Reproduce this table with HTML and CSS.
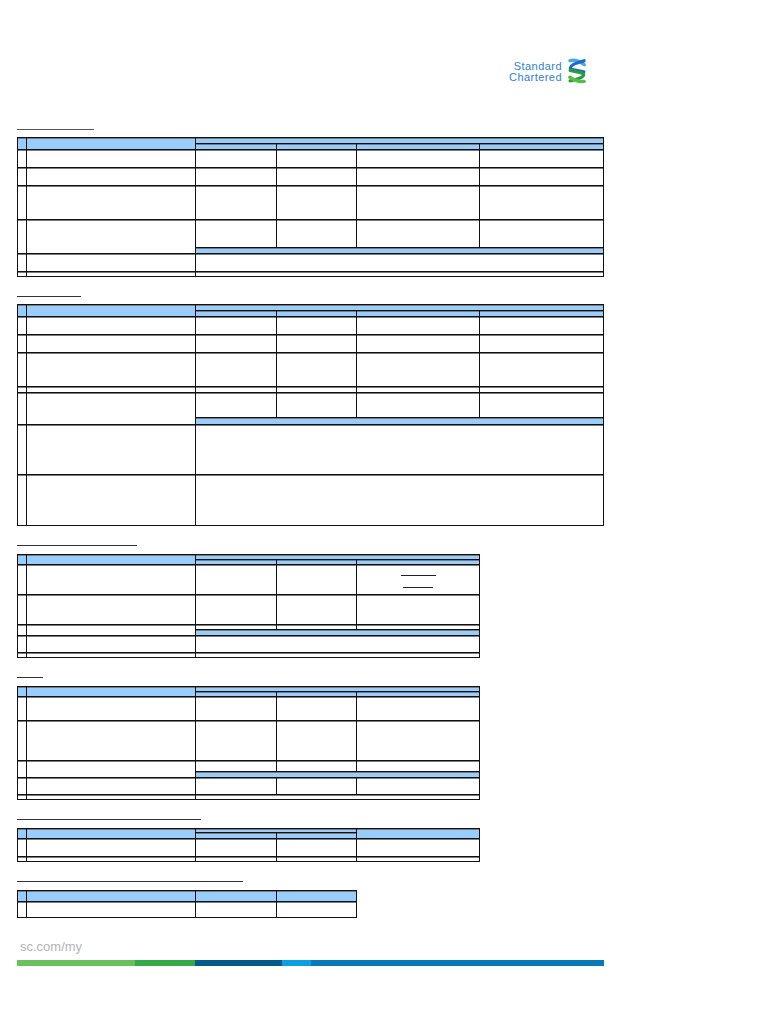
FILE: index.html
```html
<!DOCTYPE html>
<html>
<head>
<meta charset="utf-8">
<title>Standard Chartered</title>
<link rel="stylesheet" href="styles.css">
</head>
<body>
<div class="page">
  <header class="brand">
    <div class="brand-text"><span>Standard</span><span>Chartered</span></div>
    <svg class="brand-mark" viewBox="0 0 20 26" width="20" height="26">
      <path d="M3 2.6 C8 1.6 13 3.4 17.2 6.8" fill="none" stroke="#48a9e6" stroke-width="3.4" stroke-linecap="round"/>
      <path d="M17 2.8 C12 4 3.4 6.6 3.4 9.8 C3.4 12.4 11 12.2 16.8 13.8" fill="none" stroke="#1b6cc6" stroke-width="3.4" stroke-linecap="round"/>
      <path d="M3.2 12.4 C9 14 16.6 14.2 16.6 17 C16.6 19.8 9 21.6 3.2 22.8" fill="none" stroke="#2a9b3c" stroke-width="3.4" stroke-linecap="round"/>
      <path d="M2.8 19.2 C7 22.4 12 24 17.2 23.4" fill="none" stroke="#5bbb4a" stroke-width="3.4" stroke-linecap="round"/>
    </svg>
  </header>

  <section class="sec first">
    <div class="title w1"></div>
    <div class="grid wide g1">
      <div class="c b r2"></div><div class="c b r2"></div><div class="c b s4"></div>
      <div class="c b"></div><div class="c b"></div><div class="c b"></div><div class="c b"></div>
      <div class="c"></div><div class="c"></div><div class="c"></div><div class="c"></div><div class="c"></div><div class="c"></div>
      <div class="c"></div><div class="c"></div><div class="c"></div><div class="c"></div><div class="c"></div><div class="c"></div>
      <div class="c"></div><div class="c"></div><div class="c"></div><div class="c"></div><div class="c"></div><div class="c"></div>
      <div class="c r2"></div><div class="c r2"></div><div class="c"></div><div class="c"></div><div class="c"></div><div class="c"></div>
      <div class="c b s4"></div>
      <div class="c"></div><div class="c"></div><div class="c s4"></div>
      <div class="c"></div><div class="c"></div><div class="c s4"></div>
    </div>
  </section>

  <section class="sec">
    <div class="title w2"></div>
    <div class="grid wide g2">
      <div class="c b r2"></div><div class="c b r2"></div><div class="c b s4"></div>
      <div class="c b"></div><div class="c b"></div><div class="c b"></div><div class="c b"></div>
      <div class="c"></div><div class="c"></div><div class="c"></div><div class="c"></div><div class="c"></div><div class="c"></div>
      <div class="c"></div><div class="c"></div><div class="c"></div><div class="c"></div><div class="c"></div><div class="c"></div>
      <div class="c"></div><div class="c"></div><div class="c"></div><div class="c"></div><div class="c"></div><div class="c"></div>
      <div class="c"></div><div class="c"></div><div class="c"></div><div class="c"></div><div class="c"></div><div class="c"></div>
      <div class="c r2"></div><div class="c r2"></div><div class="c"></div><div class="c"></div><div class="c"></div><div class="c"></div>
      <div class="c b s4"></div>
      <div class="c"></div><div class="c"></div><div class="c s4"></div>
      <div class="c"></div><div class="c"></div><div class="c s4"></div>
    </div>
  </section>

  <section class="sec">
    <div class="title w3"></div>
    <div class="grid mid g3">
      <div class="c b r2"></div><div class="c b r2"></div><div class="c b s3"></div>
      <div class="c b"></div><div class="c b"></div><div class="c b"></div>
      <div class="c"></div><div class="c"></div><div class="c"></div><div class="c"></div>
      <div class="c marks"><span class="mark m1"></span><span class="mark m2"></span></div>
      <div class="c"></div><div class="c"></div><div class="c"></div><div class="c"></div><div class="c"></div>
      <div class="c r2"></div><div class="c r2"></div><div class="c"></div><div class="c"></div><div class="c"></div>
      <div class="c b s3"></div>
      <div class="c"></div><div class="c"></div><div class="c s3"></div>
      <div class="c"></div><div class="c"></div><div class="c s3"></div>
    </div>
  </section>

  <section class="sec">
    <div class="title w4"></div>
    <div class="grid mid g4">
      <div class="c b r2"></div><div class="c b r2"></div><div class="c b s3"></div>
      <div class="c b"></div><div class="c b"></div><div class="c b"></div>
      <div class="c"></div><div class="c"></div><div class="c"></div><div class="c"></div><div class="c"></div>
      <div class="c"></div><div class="c"></div><div class="c"></div><div class="c"></div><div class="c"></div>
      <div class="c r2"></div><div class="c r2"></div><div class="c"></div><div class="c"></div><div class="c"></div>
      <div class="c b s3"></div>
      <div class="c"></div><div class="c"></div><div class="c"></div><div class="c"></div><div class="c"></div>
      <div class="c"></div><div class="c"></div><div class="c s3"></div>
    </div>
  </section>

  <section class="sec">
    <div class="title w5"></div>
    <div class="grid mid g5">
      <div class="c b r2"></div><div class="c b r2"></div><div class="c b s2"></div><div class="c b r2"></div>
      <div class="c b"></div><div class="c b"></div>
      <div class="c"></div><div class="c"></div><div class="c"></div><div class="c"></div><div class="c"></div>
      <div class="c"></div><div class="c"></div><div class="c"></div><div class="c"></div><div class="c"></div>
    </div>
  </section>

  <section class="sec">
    <div class="title w6"></div>
    <div class="grid small g6">
      <div class="c b"></div><div class="c b"></div><div class="c b"></div><div class="c b"></div>
      <div class="c"></div><div class="c"></div><div class="c"></div><div class="c"></div>
    </div>
  </section>

  <footer class="foot">
    <div class="url">sc.com/my</div>
    <div class="bar">
      <span class="seg s-lg"></span><span class="seg s-g"></span><span class="seg s-db"></span><span class="seg s-lb"></span><span class="seg s-b"></span>
    </div>
  </footer>
</div>
</body>
</html>
```

FILE: styles.css
```css
* { box-sizing: border-box; }
html, body { margin: 0; padding: 0; background: #fff; }
body { font-family: "Liberation Sans", Arial, sans-serif; }

.page {
  width: 604px;
  padding: 58px 0 0 17px;
}

.brand {
  display: flex;
  justify-content: flex-end;
  align-items: flex-start;
  gap: 5px;
  height: 26px;
  padding-right: 17px;
}
.brand-text {
  display: flex;
  flex-direction: column;
  align-items: flex-end;
  margin-top: 3px;
  font-size: 11px;
  line-height: 11px;
  letter-spacing: 0.45px;
  color: #2f7fd0;
}
.brand-mark { display: block; }

.sec { margin-top: 19px; }
.sec.first { margin-top: 45px; }

.title {
  height: 1px;
  background: #333;
  margin-bottom: 8px;
}
.first .title, .sec:nth-of-type(2) .title { margin-bottom: 7px; }
.w1 { width: 77px; background: #555; }
.w2 { width: 64px; }
.w3 { width: 120px; }
.w4 { width: 26px; }
.w5 { width: 184px; }
.w6 { width: 226px; }

.grid {
  display: grid;
  column-gap: 1px;
  row-gap: 1px;
  background: #111;
  border: 1px solid #111;
  width: max-content;
}
.wide  { grid-template-columns: 8px 168px 80px 79px 122px 123px; }
.mid   { grid-template-columns: 8px 168px 80px 79px 122px; }
.small { grid-template-columns: 8px 168px 80px 79px; }

.g1 { grid-template-rows: 5px 5px 17px 17px 33px 27px 5px 17px 4px; }
.g2 { grid-template-rows: 5px 5px 17px 17px 33px 5px 24px 6px 49px 50px; }
.g3 { grid-template-rows: 4px 4px 29px 29px 4px 5px 16px 4px; }
.g4 { grid-template-rows: 4px 4px 23px 39px 10px 5px 16px 4px; }
.g5 { grid-template-rows: 3px 5px 17px 4px; }
.g6 { grid-template-rows: 10px 15px; }

.c {
  background: #fff;
  box-shadow: inset 0 1px 0 #7a7a7a;
}
.c.b { background: #99ccff; }
.s2 { grid-column: span 2; }
.s3 { grid-column: span 3; }
.s4 { grid-column: span 4; }
.r2 { grid-row: span 2; }

.marks {
  display: flex;
  flex-direction: column;
  align-items: center;
  padding-top: 10px;
}
.mark {
  display: block;
  height: 1px;
  background: #222;
}
.m1 { width: 35px; }
.m2 { width: 30px; margin-top: 11px; }

.foot { margin-top: 21px; }
.url {
  padding-left: 3px;
  font-size: 13px;
  line-height: 16px;
  color: #b3b3b3;
}
.bar {
  display: flex;
  width: 587px;
  height: 6px;
  margin-top: 5px;
}
.seg { display: block; height: 100%; }
.s-lg { width: 118px; background: #6cbf5f; }
.s-g  { width: 60px;  background: #36a947; }
.s-db { width: 87px;  background: #005a8a; }
.s-lb { width: 29px;  background: #0aa0e0; }
.s-b  { flex: 1;      background: #0779b6; }
```
